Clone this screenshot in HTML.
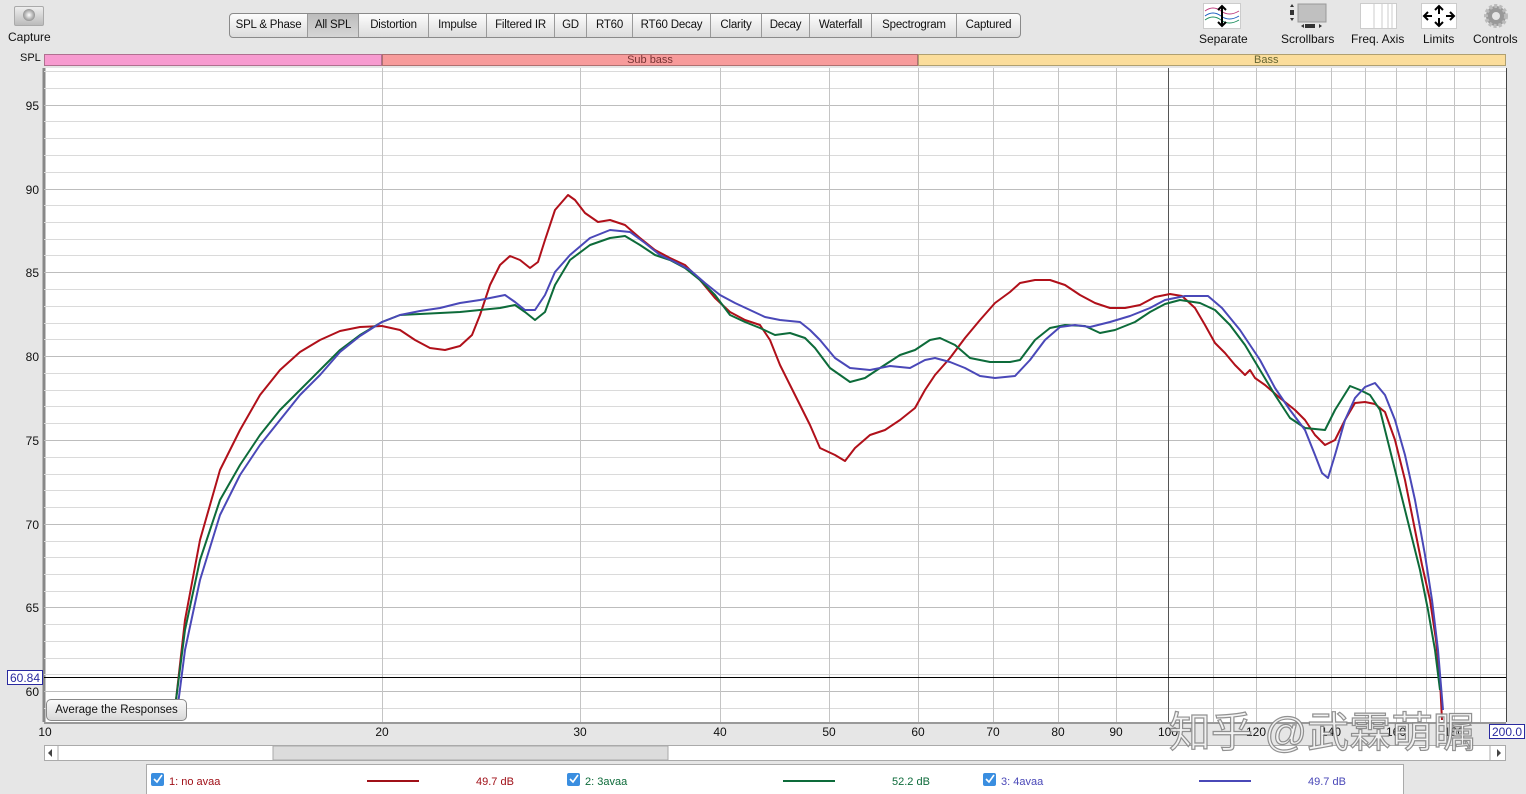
<!DOCTYPE html>
<html><head><meta charset="utf-8"><style>
*{margin:0;padding:0;box-sizing:border-box}
body{width:1526px;height:794px;background:#e6e6e6;font-family:"Liberation Sans",sans-serif;font-size:12px;color:#111;position:relative;overflow:hidden}
.a{position:absolute}
.seg{position:absolute;top:13px;height:25px;display:flex;border:1px solid #8a8a8a;border-radius:4px;overflow:hidden;background:linear-gradient(#fdfdfd,#dcdcdc);left:229px}
.seg div{padding:0;line-height:23px;border-right:1px solid #9a9a9a;font-size:11.5px;white-space:nowrap;text-align:center;overflow:hidden;letter-spacing:-0.2px}
.seg div:last-child{border-right:none}
.seg .on{background:linear-gradient(#bcbcbc,#d6d6d6)}
.tl{position:absolute;top:32px;font-size:12px;text-align:center}
</style></head><body>
<div class="a" style="left:14px;top:6px;width:30px;height:20px;background:linear-gradient(#eee,#bbb);border:1px solid #aaa;border-radius:2px"></div>
<div class="a" style="left:23px;top:9px;width:12px;height:12px;border-radius:50%;background:radial-gradient(#fff,#666)"></div>
<div class="a" style="left:8px;top:30px;font-size:12px">Capture</div>
<div class="seg">
<div style="width:78px">SPL &amp; Phase</div><div class="on" style="width:51px">All SPL</div><div style="width:70px">Distortion</div><div style="width:58px">Impulse</div><div style="width:68px">Filtered IR</div><div style="width:32px">GD</div><div style="width:46px">RT60</div><div style="width:78px">RT60 Decay</div><div style="width:51px">Clarity</div><div style="width:48px">Decay</div><div style="width:62px">Waterfall</div><div style="width:85px">Spectrogram</div><div style="width:63px">Captured</div>
</div>
<svg class="a" style="left:1203px;top:3px" width="38" height="26"><rect x="0.5" y="0.5" width="37" height="25" fill="#fff" stroke="#ccc"/><path d="M2 8 Q10 2 18 8 T36 8" stroke="#c04080" fill="none"/><path d="M2 13 Q10 7 18 13 T36 13" stroke="#2060c0" fill="none"/><path d="M2 17 Q10 11 18 17 T36 17" stroke="#209060" fill="none"/><path d="M19 3v20M15 7l4-4 4 4M15 19l4 4 4-4" stroke="#000" stroke-width="2" fill="none"/></svg>
<div class="tl" style="left:1199px">Separate</div>
<svg class="a" style="left:1288px;top:3px" width="40" height="26"><rect x="10" y="1" width="28" height="18" fill="#c0c0c0" stroke="#999"/><rect x="2" y="7" width="4" height="5" fill="#333"/><path d="M2 4l2-3 2 3zM2 15l2 3 2-3z" fill="#333"/><rect x="17" y="21" width="10" height="4" fill="#333"/><path d="M13 23l3-2v4zM31 21v4l3-2z" fill="#333"/></svg>
<div class="tl" style="left:1281px">Scrollbars</div>
<svg class="a" style="left:1360px;top:3px" width="37" height="26"><rect x="0.5" y="0.5" width="36" height="25" fill="#fff" stroke="#ccc"/><path d="M14 1v24M22 1v24M28 1v24M32 1v24" stroke="#ccc"/></svg>
<div class="tl" style="left:1351px">Freq. Axis</div>
<svg class="a" style="left:1421px;top:3px" width="36" height="26"><rect x="0.5" y="0.5" width="35" height="25" fill="#fff" stroke="#ccc"/><path d="M18 3v8M14 7l4-4 4 4M18 15v8M14 19l4 4 4-4M3 13h8M7 9l-4 4 4 4M25 13h8M29 9l4 4-4 4" stroke="#000" stroke-width="2" fill="none"/></svg>
<div class="tl" style="left:1423px">Limits</div>
<svg class="a" style="left:1484px;top:4px" width="24" height="24"><circle cx="12" cy="12" r="10" fill="#999" stroke="#bbb" stroke-width="4" stroke-dasharray="3 2"/><circle cx="12" cy="12" r="4" fill="#e6e6e6"/></svg>
<div class="tl" style="left:1473px">Controls</div>
<div class="a" style="left:20px;top:52px;font-size:11px">SPL</div>
<div class="a" style="left:44px;top:54px;width:338px;height:12px;background:#f79bd0;border:1px solid #b07090"></div>
<div class="a" style="left:382px;top:54px;width:536px;height:12px;background:#f79b9b;border:1px solid #b07070;font-size:11px;line-height:10px;text-align:center;color:#733">Sub bass</div>
<div class="a" style="left:918px;top:54px;width:588px;height:12px;background:#fbdd9b;border:1px solid #b0a070;font-size:11px;line-height:10px;color:#663"><span style="position:absolute;left:335px">Bass</span></div>
<svg class="a" style="left:0;top:0" width="1526" height="794">
<rect x="44" y="68" width="1462" height="654" fill="#fff"/>
<path d="M44 68v654" stroke="#888" stroke-width="3"/>
<g stroke="#dadada" stroke-width="1">
<path d="M44 71.5H1506M44 88.5H1506M44 121.5H1506M44 138.5H1506M44 155.5H1506M44 172.5H1506M44 205.5H1506M44 222.5H1506M44 239.5H1506M44 255.5H1506M44 289.5H1506M44 306.5H1506M44 323.5H1506M44 339.5H1506M44 373.5H1506M44 390.5H1506M44 406.5H1506M44 423.5H1506M44 457.5H1506M44 474.5H1506M44 490.5H1506M44 507.5H1506M44 541.5H1506M44 557.5H1506M44 574.5H1506M44 591.5H1506M44 624.5H1506M44 641.5H1506M44 658.5H1506M44 674.5H1506M44 708.5H1506"/>
</g>
<g stroke="#bdbdbd"><path d="M44 105.5H1506M44 189.5H1506M44 272.5H1506M44 356.5H1506M44 440.5H1506M44 524.5H1506M44 607.5H1506M44 691.5H1506"/></g>
<g stroke="#c4c4c4"><path d="M382.5 68v654M580.5 68v654M720.5 68v654M829.5 68v654M918.5 68v654M993.5 68v654M1058.5 68v654M1116.5 68v654M1213.5 68v654M1256.5 68v654M1295.5 68v654M1331.5 68v654M1365.5 68v654M1396.5 68v654M1426.5 68v654M1454.5 68v654M1480.5 68v654"/></g>
<path d="M1168.5 68v654" stroke="#555"/>
<path d="M1506.5 68v654" stroke="#444"/>
<path d="M44 677.5H1506" stroke="#000"/>
<g fill="none" stroke-width="2" stroke-linejoin="round">
<polyline stroke="#b0101a" points="176,700 185,620 200,540 220,470 240,430 260,395 280,370 300,352 320,340 340,331 360,327 382,326 400,330 415,340 430,348 445,350 460,346 472,335 480,315 490,285 500,265 510,256 520,260 530,268 538,262 545,240 555,210 568,195 575,200 585,213 598,222 610,220 625,225 640,238 655,250 670,258 685,265 700,280 715,298 730,312 745,320 760,325 770,340 780,365 790,385 800,405 810,425 820,448 835,455 845,461 855,448 870,435 885,430 900,420 915,408 925,390 935,375 950,358 965,338 980,320 995,303 1010,292 1020,283 1035,280 1050,280 1065,285 1080,295 1095,303 1110,308 1125,308 1140,305 1155,297 1170,294 1182,296 1195,308 1205,325 1215,343 1225,353 1235,365 1245,375 1250,370 1255,378 1265,385 1280,398 1295,410 1305,420 1315,435 1325,445 1335,440 1345,420 1355,403 1365,402 1375,404 1385,412 1395,440 1405,480 1415,530 1422,565 1430,600 1436,640 1440,680 1442,720"/>
<polyline stroke="#0d6b3a" points="176,700 185,630 200,560 220,500 240,465 260,435 280,410 300,390 320,370 340,350 360,335 382,322 400,315 420,314 440,313 460,312 480,310 500,308 515,305 525,312 535,320 545,312 555,285 570,260 590,245 610,238 625,236 640,245 655,255 670,260 685,268 700,280 715,295 730,315 745,322 760,328 775,335 790,333 805,338 815,348 830,368 850,382 865,378 880,368 900,355 915,350 930,340 940,338 955,345 970,358 990,362 1010,362 1020,360 1035,340 1050,328 1065,325 1085,326 1100,333 1115,330 1135,322 1150,312 1165,304 1180,300 1200,303 1215,310 1230,325 1245,345 1260,370 1275,395 1290,418 1305,428 1325,430 1335,410 1350,386 1360,390 1370,395 1380,410 1390,450 1400,490 1410,530 1420,570 1428,610 1435,650 1440,690"/>
<polyline stroke="#4a48b8" points="176,720 185,650 200,580 220,515 240,475 260,445 280,420 300,395 320,375 340,352 360,336 382,322 400,315 420,311 440,308 460,303 480,300 505,295 515,302 525,310 535,310 545,295 555,272 570,255 590,238 610,230 630,232 645,243 660,255 675,262 690,270 705,283 720,295 735,303 750,310 765,317 780,320 800,322 810,330 820,340 835,358 850,368 870,370 890,366 910,368 925,360 935,358 950,362 965,368 980,376 995,378 1015,376 1030,360 1045,340 1060,327 1075,325 1090,327 1110,322 1130,316 1150,308 1165,300 1185,296 1208,296 1222,308 1240,330 1260,360 1275,388 1290,410 1305,430 1315,455 1322,473 1328,478 1335,455 1345,420 1355,398 1365,387 1375,383 1385,395 1395,420 1405,455 1415,500 1425,555 1432,600 1438,650 1443,710"/>
</g>
<rect x="44" y="722" width="1462" height="2" fill="#999"/>
<g font-family="Liberation Sans" font-size="12" fill="#111" text-anchor="end">
<text x="39" y="110">95</text><text x="39" y="194">90</text><text x="39" y="277">85</text><text x="39" y="361">80</text><text x="39" y="445">75</text><text x="39" y="529">70</text><text x="39" y="612">65</text><text x="39" y="696">60</text>
</g>
<g font-family="Liberation Sans" font-size="12" fill="#111" text-anchor="middle">
<text x="45" y="736">10</text><text x="382" y="736">20</text><text x="580" y="736">30</text><text x="720" y="736">40</text><text x="829" y="736">50</text><text x="918" y="736">60</text><text x="993" y="736">70</text><text x="1058" y="736">80</text><text x="1116" y="736">90</text><text x="1168" y="736">100</text><text x="1256" y="736">120</text><text x="1331" y="736">140</text><text x="1396" y="736">160</text><text x="1454" y="736">180</text>
</g>
<rect x="7.5" y="670.5" width="35" height="14" fill="#fff" stroke="#2a2aa0"/>
<text x="25" y="682" font-family="Liberation Sans" font-size="12" fill="#2a2aa0" text-anchor="middle">60.84</text>
<rect x="1489.5" y="724.5" width="35" height="14" fill="#fff" stroke="#2a2aa0"/>
<text x="1507" y="736" font-family="Liberation Sans" font-size="12" fill="#2a2aa0" text-anchor="middle">200.0</text>
<rect x="44.5" y="745.5" width="1461" height="15" fill="#fff" stroke="#aaa"/>
<rect x="273" y="746" width="395" height="14" fill="#dcdcdc" stroke="#aaa"/>
<path d="M52 749v8l-4-4z" fill="#444"/><path d="M1497 749v8l4-4z" fill="#444"/>
<path d="M58 746v14M1490 746v14" stroke="#aaa"/>
<text x="1322" y="747" font-family="Liberation Sans,Noto Sans CJK SC,sans-serif" font-size="42" fill="#f4f4f4" stroke="#888" stroke-width="1.2" text-anchor="middle" opacity="0.92">知乎 @武霖萌瞩</text>
</svg>
<div class="a" style="left:46px;top:699px;width:141px;height:22px;border:1px solid #888;border-radius:5px;background:linear-gradient(#fafafa,#d8d8d8);font-size:11.5px;line-height:20px;text-align:center;white-space:nowrap">Average the Responses</div>
<div class="a" style="left:146px;top:764px;width:1258px;height:30px;background:#fff;border:1px solid #aaa;border-bottom:none"></div>
<svg class="a" style="left:0;top:764px" width="1526" height="30">
<g><rect x="151" y="9" width="13" height="13" rx="2" fill="#3a8ee0"/><path d="M154 15l3 3 5-7" stroke="#fff" stroke-width="1.6" fill="none"/>
<rect x="567" y="9" width="13" height="13" rx="2" fill="#3a8ee0"/><path d="M570 15l3 3 5-7" stroke="#fff" stroke-width="1.6" fill="none"/>
<rect x="983" y="9" width="13" height="13" rx="2" fill="#3a8ee0"/><path d="M986 15l3 3 5-7" stroke="#fff" stroke-width="1.6" fill="none"/></g>
<path d="M367 17h52" stroke="#a01018" stroke-width="2"/><path d="M783 17h52" stroke="#0d6b3a" stroke-width="2"/><path d="M1199 17h52" stroke="#4a48b8" stroke-width="2"/>
<g font-family="Liberation Sans" font-size="11">
<text x="169" y="21" fill="#a01018">1: no avaa</text><text x="476" y="21" fill="#a01018">49.7 dB</text>
<text x="585" y="21" fill="#0d6b3a">2: 3avaa</text><text x="892" y="21" fill="#0d6b3a">52.2 dB</text>
<text x="1001" y="21" fill="#4a48b8">3: 4avaa</text><text x="1308" y="21" fill="#4a48b8">49.7 dB</text>
</g>
</svg>
</body></html>
